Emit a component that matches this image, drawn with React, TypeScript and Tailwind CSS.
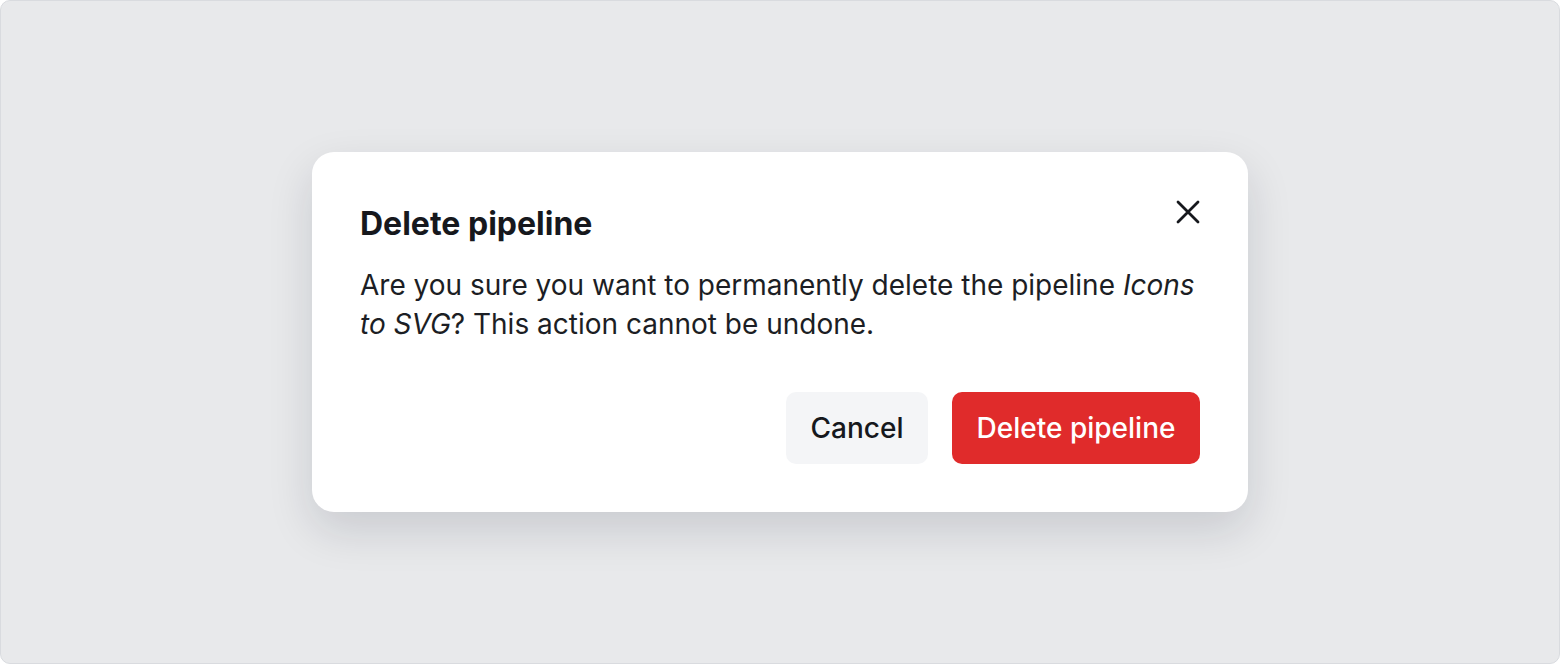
import React from "react"

function CloseIcon() {
  return (
    <svg width="24" height="24" viewBox="0 0 24 24" fill="none" stroke="currentColor" strokeWidth="2.8" strokeLinecap="round">
      <path d="M2 2L22 22M22 2L2 22" />
    </svg>
  )
}

export default function App() {
  return (
    <div className="h-[664px] w-[1560px] font-['Inter',sans-serif]">
      <div className="flex h-full w-full items-center justify-center rounded-[10px] border border-[#d9dbdf] bg-[#e8e9eb]">
        <div className="w-[936px] rounded-[22px] bg-white p-[48px] shadow-[0_18px_45px_rgba(17,24,39,0.14)]">
          <div className="flex items-start justify-between">
            <h2 className="text-[32px] font-bold leading-[48px] text-[#16181d]">Delete pipeline</h2>
            <button className="text-[#16181d]" aria-label="Close">
              <CloseIcon />
            </button>
          </div>
          <p className="mt-[18px] text-[28px] leading-[39px] text-[#1c1e24]">
            Are you sure you want to permanently delete the pipeline <em>Icons to SVG</em>? This action cannot be undone.
          </p>
          <div className="mt-[48px] flex justify-end gap-[24px]">
            <button className="h-[72px] w-[142px] rounded-[10px] bg-[#f4f5f7] text-[28px] font-medium text-[#16181d]">
              Cancel
            </button>
            <button className="h-[72px] w-[248px] rounded-[10px] bg-[#e02b2b] text-[28px] font-medium text-white">
              Delete pipeline
            </button>
          </div>
        </div>
      </div>
    </div>
  )
}
